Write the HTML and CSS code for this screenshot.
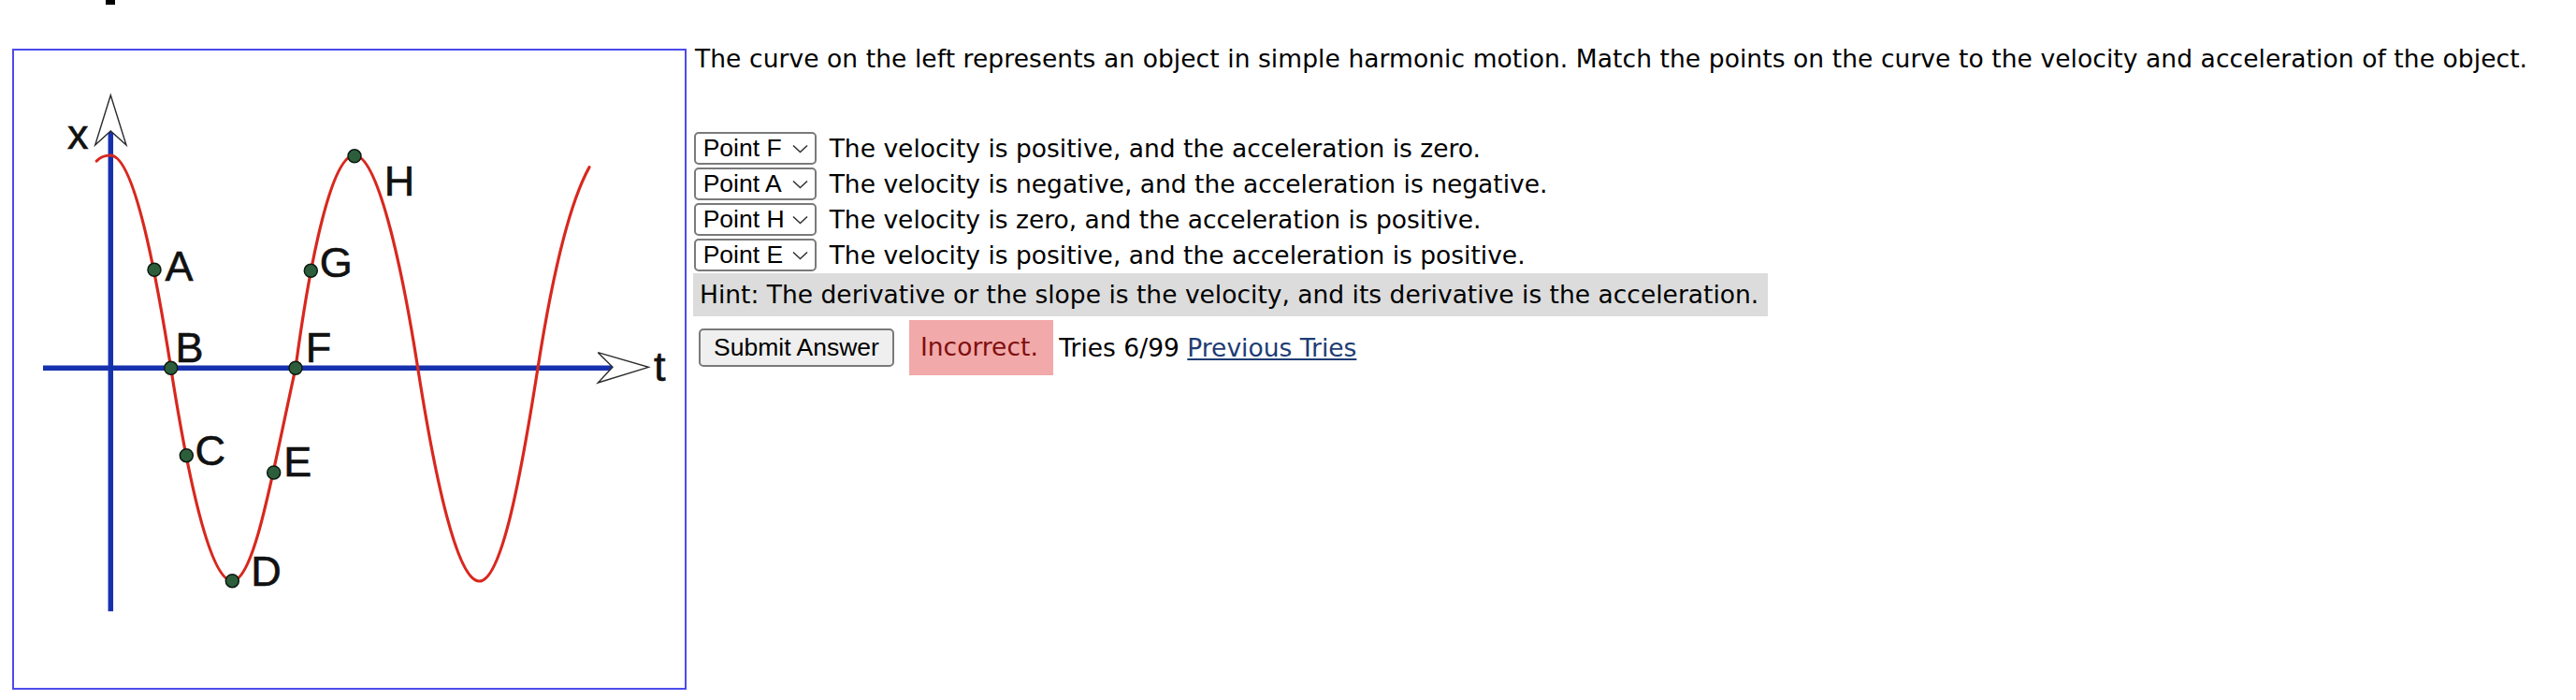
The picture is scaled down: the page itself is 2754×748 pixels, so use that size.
FILE: index.html
```html
<!DOCTYPE html>
<html lang="en">
<head>
<meta charset="utf-8">
<title>Simple Harmonic Motion</title>
<link rel="stylesheet" href="styles.css">
</head>
<body>
<div class="topmark"></div>
<div class="main">
  <div class="figure">
    <svg class="graph" width="717" height="681" viewBox="15 54 717 681" xmlns="http://www.w3.org/2000/svg">
      <!-- axes -->
      <line x1="118.3" y1="140" x2="118.3" y2="653.3" class="axis"/>
      <line x1="46" y1="393.3" x2="655" y2="393.3" class="axis"/>
      <polygon class="arrow" points="118.3,101.7 135,155 118.3,140 101.7,155"/>
      <polygon class="arrow" points="693.3,392.3 639.3,409 655,392.3 639.3,376.7"/>
      <!-- curve -->
      <path class="curve" d="M103.3,172 C108,167 112,166 118,166
        C142,166 164.7,278.3 182.7,393.3
        C200.7,508.3 224.3,620.7 248.3,620.7
        C272.3,620.7 292,501.3 316,393.3
        C332,273.3 355,166 379,166
        C403,166 428.7,278.3 446.7,393.3
        C464.7,508.3 488.3,621 512.3,621
        C536.3,621 557,508.3 575,393.3
        C593.3,276.3 611.7,211.7 630,178.7"/>
      <!-- points -->
      <circle class="pt" cx="165" cy="288.3" r="7"/>
      <circle class="pt" cx="182.7" cy="393.3" r="7"/>
      <circle class="pt" cx="199.3" cy="486.7" r="7"/>
      <circle class="pt" cx="248.3" cy="620.7" r="7"/>
      <circle class="pt" cx="292.7" cy="505" r="7"/>
      <circle class="pt" cx="316" cy="393.3" r="7"/>
      <circle class="pt" cx="332.3" cy="289.3" r="7"/>
      <circle class="pt" cx="379" cy="166.8" r="7"/>
      <!-- labels -->
      <text class="lbl" x="176.5" y="300">A</text>
      <text class="lbl" x="187.5" y="386.7">B</text>
      <text class="lbl" x="208.5" y="497">C</text>
      <text class="lbl" x="268.2" y="626">D</text>
      <text class="lbl" x="303.2" y="509.3">E</text>
      <text class="lbl" x="326.8" y="386.7">F</text>
      <text class="lbl" x="341.8" y="295.5">G</text>
      <text class="lbl" x="410.8" y="208.8">H</text>
      <text class="lbl" x="72" y="159.3">x</text>
      <text class="lbl" x="699" y="406.7">t</text>
    </svg>
  </div>
  <div class="panel">
    <p class="prompt">The curve on the left represents an object in simple harmonic motion. Match the points on the curve to the velocity and acceleration of the object.</p>
    <div class="answers">
      <div class="row">
        <div class="dropdown"><span>Point F</span><svg class="chev" width="17" height="10" viewBox="0 0 17 10"><polyline points="1,1.5 8.5,8.5 16,1.5"/></svg></div>
        <span class="stmt">The velocity is positive, and the acceleration is zero.</span>
      </div>
      <div class="row">
        <div class="dropdown"><span>Point A</span><svg class="chev" width="17" height="10" viewBox="0 0 17 10"><polyline points="1,1.5 8.5,8.5 16,1.5"/></svg></div>
        <span class="stmt">The velocity is negative, and the acceleration is negative.</span>
      </div>
      <div class="row">
        <div class="dropdown"><span>Point H</span><svg class="chev" width="17" height="10" viewBox="0 0 17 10"><polyline points="1,1.5 8.5,8.5 16,1.5"/></svg></div>
        <span class="stmt">The velocity is zero, and the acceleration is positive.</span>
      </div>
      <div class="row">
        <div class="dropdown"><span>Point E</span><svg class="chev" width="17" height="10" viewBox="0 0 17 10"><polyline points="1,1.5 8.5,8.5 16,1.5"/></svg></div>
        <span class="stmt">The velocity is positive, and the acceleration is positive.</span>
      </div>
    </div>
    <div class="hint">Hint: The derivative or the slope is the velocity, and its derivative is the acceleration.</div>
    <div class="submit-row">
      <button class="submit" type="button">Submit Answer</button>
      <span class="incorrect">Incorrect.</span>
      <span class="tries">Tries 6/99 <a href="#" class="prev">Previous Tries</a></span>
    </div>
  </div>
</div>
</body>
</html>
```

FILE: styles.css
```css
html, body {
  margin: 0;
  padding: 0;
  background: #ffffff;
}

body {
  font-family: Verdana, "DejaVu Sans", sans-serif;
  font-size: 26.5px;
  color: #000000;
}

.topmark {
  width: 10px;
  height: 5px;
  margin-left: 113px;
  background: #000000;
}

.main {
  display: flex;
  align-items: flex-start;
  margin-top: 39.5px;
  padding-left: 13px;
}

.figure {
  box-sizing: border-box;
  width: 721px;
  height: 685px;
  margin-top: 7.5px;
  border: 2px solid #4b4bec;
  background: #ffffff;
  flex: none;
}

.graph {
  display: block;
}

.axis {
  stroke: #1631ae;
  stroke-width: 5.5;
}

.arrow {
  fill: #ffffff;
  stroke: #2b2b2b;
  stroke-width: 1.4;
  stroke-linejoin: miter;
}

.curve {
  fill: none;
  stroke: #d8281e;
  stroke-width: 3.2;
  stroke-linecap: round;
}

.pt {
  fill: #2d5e3c;
  stroke: #0d1a10;
  stroke-width: 1.5;
}

.lbl {
  font-family: "Liberation Sans", Arial, sans-serif;
  font-size: 45px;
  fill: #111111;
  stroke: #111111;
  stroke-width: 0.6;
}

.panel {
  margin-left: 7px;
  display: flex;
  flex-direction: column;
  align-items: flex-start;
}

.prompt {
  margin: 0;
  padding-left: 2px;
  line-height: 36px;
  letter-spacing: 0.07px;
  white-space: nowrap;
}

.answers {
  margin-top: 59px;
  display: flex;
  flex-direction: column;
}

.row {
  height: 38px;
  display: flex;
  align-items: center;
  padding-left: 0.7px;
}

.dropdown {
  box-sizing: border-box;
  width: 131px;
  height: 35px;
  display: flex;
  align-items: center;
  justify-content: space-between;
  padding: 0 7px 0 8px;
  border: 2px solid #7a7a7a;
  border-radius: 5px;
  background: #ffffff;
  font-family: "Liberation Sans", Arial, sans-serif;
  font-size: 26.5px;
  margin-right: 14px;
}

.chev {
  display: block;
}

.chev polyline {
  fill: none;
  stroke: #333333;
  stroke-width: 1.6;
}

.stmt {
  white-space: nowrap;
}

.hint {
  height: 46px;
  line-height: 46px;
  padding: 0 10px 0 7px;
  background: #dcdcdc;
  white-space: nowrap;
}

.submit-row {
  margin-top: 4.8px;
  height: 58.4px;
  display: flex;
  align-items: center;
}

.submit {
  box-sizing: border-box;
  height: 41.6px;
  width: 208.4px;
  margin-left: 6.3px;
  padding: 0 12px;
  border: 2px solid #7a7a7a;
  border-radius: 5px;
  background: #efefef;
  color: #000000;
  font-family: "Liberation Sans", Arial, sans-serif;
  font-size: 26.5px;
}

.incorrect {
  box-sizing: border-box;
  width: 153.7px;
  margin-left: 16.3px;
  height: 58.4px;
  line-height: 58.4px;
  padding: 0 12px;
  background: #f2a9a9;
  color: #7e0f0f;
  white-space: nowrap;
}

.tries {
  margin-left: 6.6px;
  white-space: nowrap;
}

.prev {
  color: #1e3c73;
  text-decoration: underline;
}
```
